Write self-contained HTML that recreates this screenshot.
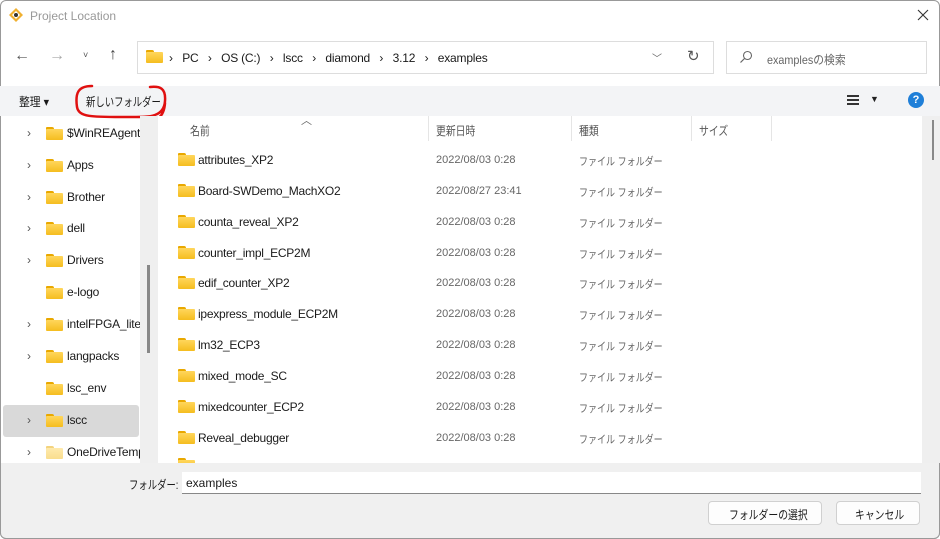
<!DOCTYPE html>
<html><head><meta charset="utf-8"><style>
*{margin:0;padding:0;box-sizing:border-box}
body{width:940px;height:539px;overflow:hidden;background:#fff;font-family:"Liberation Sans","Noto Sans CJK JP",sans-serif;font-size:12px;color:#1a1a1a;position:relative}
.a{position:absolute}
.j{display:inline-block;transform:scaleX(.82);transform-origin:0 0;white-space:nowrap}
.fold{position:absolute;width:17px;height:13px}
.fold:before{content:"";position:absolute;left:0;top:0;width:8px;height:4px;background:#e9a800;border-radius:1px 2px 0 0}
.fold:after{content:"";position:absolute;left:0;top:2px;width:17px;height:11px;background:linear-gradient(#ffd65c,#f5bd1f);border-radius:1px}
.lt{position:absolute;left:0;width:140px;height:32px;overflow:hidden}
.lt .c{position:absolute;left:27px;top:8px;color:#555;font-size:12px}
.lt .fold{left:46px;top:9px}
.lt .t{position:absolute;left:67px;top:8px;font-size:12px;white-space:nowrap;letter-spacing:-0.2px}
.row{position:absolute;left:158px;width:764px;height:31px}
.row .fold{left:20px;top:8px}
.row .n{position:absolute;left:40px;top:8px;letter-spacing:-0.25px}
.row .d{position:absolute;left:278px;top:9px;color:#666;font-size:11px}
.row .k{position:absolute;left:421px;top:8px;color:#666;font-size:11px}
</style></head><body>
<div class="a" style="left:0;top:0;width:940px;height:539px;border:1px solid #999;border-radius:6px"></div>
<svg class="a" style="left:8px;top:7px" width="16" height="16"><path d="M8 1L15 8L8 15L1 8Z" fill="#f0b030"/><path d="M8 4L12 8L8 12L4 8Z" fill="#fff"/><circle cx="8" cy="8" r="2" fill="#333"/></svg>
<div class="a" style="left:30px;top:9px;color:#999;font-size:12px">Project Location</div>
<svg class="a" style="left:917px;top:9px" width="12" height="12"><path d="M1 1L11 11M11 1L1 11" stroke="#333" stroke-width="1.1"/></svg>
<div class="a" style="left:14px;top:47px;font-size:16px;color:#555">←</div>
<div class="a" style="left:49px;top:47px;font-size:16px;color:#aaa">→</div>
<div class="a" style="left:83px;top:50px;font-size:9px;color:#555">˅</div>
<div class="a" style="left:109px;top:46px;font-size:16px;color:#444">↑</div>
<div class="a" style="left:137px;top:41px;width:577px;height:33px;border:1px solid #ddd;background:#fff"></div>
<div class="fold" style="left:146px;top:50px"></div>
<div class="a" style="left:169px;top:51px;font-size:12px;white-space:nowrap;letter-spacing:-0.2px">›&nbsp;&nbsp; PC &nbsp;&nbsp;›&nbsp;&nbsp; OS (C:) &nbsp;&nbsp;›&nbsp;&nbsp; lscc &nbsp;&nbsp;›&nbsp;&nbsp; diamond &nbsp;&nbsp;›&nbsp;&nbsp; 3.12 &nbsp;&nbsp;›&nbsp;&nbsp; examples</div>
<div class="a" style="left:652px;top:50px;color:#666;font-size:10px">﹀</div>
<div class="a" style="left:687px;top:47px;color:#555;font-size:15px">↻</div>
<div class="a" style="left:726px;top:41px;width:201px;height:33px;border:1px solid #ddd"></div>
<svg class="a" style="left:739px;top:50px" width="14" height="14"><circle cx="8.5" cy="5.5" r="4" fill="none" stroke="#666" stroke-width="1.1"/><path d="M5.5 8.5L1.5 12.5" stroke="#666" stroke-width="1.2"/></svg>
<div class="a" style="left:767px;top:51px;color:#666;font-size:12px"><span class="j" style="transform:scaleX(.9)">examplesの検索</span></div>
<div class="a" style="left:0;top:86px;width:940px;height:30px;background:#f3f4f6"></div>
<div class="a" style="left:19px;top:93px;font-size:12px"><span class="j" style="transform:scaleX(.9)">整理 ▾</span></div>
<div class="a" style="left:86px;top:93px;font-size:12px"><span class="j" style="transform:scaleX(.78)">新しいフォルダー</span></div>
<svg class="a" style="left:72px;top:83px" width="100" height="45"><path d="M20 3 C6 3 3 10 5 24 C7 35 22 34 60 34 C78 34 92 34 93 18 C94 5 88 3 78 4 M93 20 C92 35 84 38 73 40" fill="none" stroke="#e01010" stroke-width="2.5" stroke-linecap="round"/></svg>
<div class="a" style="left:847px;top:95px;width:12px;height:10px;border-top:2px solid #333;border-bottom:2px solid #333"></div>
<div class="a" style="left:847px;top:99px;width:12px;height:2px;background:#333"></div>
<div class="a" style="left:870px;top:94px;font-size:9px;color:#222">▼</div>
<div class="a" style="left:908px;top:92px;width:16px;height:16px;border-radius:50%;background:#1f7fd8;color:#fff;font-size:11px;font-weight:bold;text-align:center;line-height:16px">?</div>
<div class="a" style="left:140px;top:116px;width:18px;height:347px;background:#efefef"></div>
<div class="a" style="left:147px;top:265px;width:3px;height:88px;background:#888"></div>
<div class="a" style="left:922px;top:116px;width:18px;height:347px;background:#efefef"></div>
<div class="a" style="left:932px;top:120px;width:2px;height:40px;background:#888"></div>
<div class="a" style="left:0;top:463px;width:940px;height:76px;background:#f0f0f0;border-radius:0 0 6px 6px;border:1px solid #999;border-top:none"></div>

<div class="lt" style="top:118px"><span class="c">›</span><div class="fold"></div><span class="t">$WinREAgent</span></div>
<div class="lt" style="top:150px"><span class="c">›</span><div class="fold"></div><span class="t">Apps</span></div>
<div class="lt" style="top:182px"><span class="c">›</span><div class="fold"></div><span class="t">Brother</span></div>
<div class="lt" style="top:213px"><span class="c">›</span><div class="fold"></div><span class="t">dell</span></div>
<div class="lt" style="top:245px"><span class="c">›</span><div class="fold"></div><span class="t">Drivers</span></div>
<div class="lt" style="top:277px"><div class="fold"></div><span class="t">e-logo</span></div>
<div class="lt" style="top:309px"><span class="c">›</span><div class="fold"></div><span class="t">intelFPGA_lite</span></div>
<div class="lt" style="top:341px"><span class="c">›</span><div class="fold"></div><span class="t">langpacks</span></div>
<div class="lt" style="top:373px"><div class="fold"></div><span class="t">lsc_env</span></div>
<div class="lt" style="top:405px;left:3px;width:136px;background:#d9d9d9;border-radius:3px"><span class="c" style="left:24px">›</span><div class="fold" style="left:43px"></div><span class="t" style="left:64px">lscc</span></div>
<div class="lt" style="top:437px;height:26px"><span class="c">›</span><div class="fold" style="opacity:.5"></div><span class="t">OneDriveTemp</span></div>

<div class="a" style="left:158px;top:116px;width:764px;height:347px;background:#fff;overflow:hidden">
<div class="a" style="left:32px;top:6px;color:#555"><span class="j">名前</span></div>
<div class="a" style="left:143px;top:-4px;color:#666;font-size:11px">︿</div>
<div class="a" style="left:270px;top:0;width:1px;height:25px;background:#e5e5e5"></div>
<div class="a" style="left:278px;top:6px;color:#555"><span class="j">更新日時</span></div>
<div class="a" style="left:413px;top:0;width:1px;height:25px;background:#e5e5e5"></div>
<div class="a" style="left:421px;top:6px;color:#555"><span class="j">種類</span></div>
<div class="a" style="left:533px;top:0;width:1px;height:25px;background:#e5e5e5"></div>
<div class="a" style="left:541px;top:6px;color:#555"><span class="j">サイズ</span></div>
<div class="a" style="left:613px;top:0;width:1px;height:25px;background:#e5e5e5"></div>
<div class="fold" style="left:20px;top:342px"></div>
</div>
<div class="row" style="top:145px"><div class="fold"></div><span class="n">attributes_XP2</span><span class="d">2022/08/03 0:28</span><span class="k"><span class="j">ファイル フォルダー</span></span></div>
<div class="row" style="top:176px"><div class="fold"></div><span class="n">Board-SWDemo_MachXO2</span><span class="d">2022/08/27 23:41</span><span class="k"><span class="j">ファイル フォルダー</span></span></div>
<div class="row" style="top:207px"><div class="fold"></div><span class="n">counta_reveal_XP2</span><span class="d">2022/08/03 0:28</span><span class="k"><span class="j">ファイル フォルダー</span></span></div>
<div class="row" style="top:238px"><div class="fold"></div><span class="n">counter_impl_ECP2M</span><span class="d">2022/08/03 0:28</span><span class="k"><span class="j">ファイル フォルダー</span></span></div>
<div class="row" style="top:268px"><div class="fold"></div><span class="n">edif_counter_XP2</span><span class="d">2022/08/03 0:28</span><span class="k"><span class="j">ファイル フォルダー</span></span></div>
<div class="row" style="top:299px"><div class="fold"></div><span class="n">ipexpress_module_ECP2M</span><span class="d">2022/08/03 0:28</span><span class="k"><span class="j">ファイル フォルダー</span></span></div>
<div class="row" style="top:330px"><div class="fold"></div><span class="n">lm32_ECP3</span><span class="d">2022/08/03 0:28</span><span class="k"><span class="j">ファイル フォルダー</span></span></div>
<div class="row" style="top:361px"><div class="fold"></div><span class="n">mixed_mode_SC</span><span class="d">2022/08/03 0:28</span><span class="k"><span class="j">ファイル フォルダー</span></span></div>
<div class="row" style="top:392px"><div class="fold"></div><span class="n">mixedcounter_ECP2</span><span class="d">2022/08/03 0:28</span><span class="k"><span class="j">ファイル フォルダー</span></span></div>
<div class="row" style="top:423px"><div class="fold"></div><span class="n">Reveal_debugger</span><span class="d">2022/08/03 0:28</span><span class="k"><span class="j">ファイル フォルダー</span></span></div>

<div class="a" style="left:129px;top:476px;font-size:12px"><span class="j" style="transform:scaleX(.78)">フォルダー:</span></div>
<div class="a" style="left:182px;top:472px;width:739px;height:22px;background:#fff;border-bottom:1px solid #888"></div>
<div class="a" style="left:186px;top:476px;font-size:12px">examples</div>
<div class="a" style="left:708px;top:501px;width:114px;height:24px;background:#fdfdfd;border:1px solid #d0d0d0;border-radius:4px;font-size:12px"><span class="j" style="position:absolute;left:20px;top:4px">フォルダーの選択</span></div>
<div class="a" style="left:836px;top:501px;width:84px;height:24px;background:#fdfdfd;border:1px solid #d0d0d0;border-radius:4px;font-size:12px"><span class="j" style="position:absolute;left:18px;top:4px">キャンセル</span></div>
</body></html>
